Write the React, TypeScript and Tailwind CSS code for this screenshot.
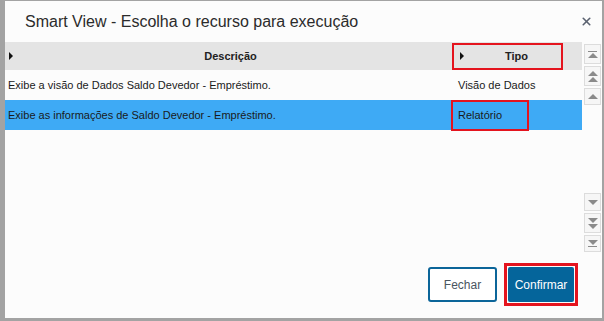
import { X } from 'lucide-react';

const font = { fontFamily: '"Liberation Sans", Arial, sans-serif' };

function Tri({ dir }: { dir: 'up' | 'down' }) {
  return dir === 'up' ? (
    <div className="w-0 h-0 border-l-[5px] border-r-[5px] border-b-[5px] border-l-transparent border-r-transparent border-b-[#8a8a8a]" />
  ) : (
    <div className="w-0 h-0 border-l-[5px] border-r-[5px] border-t-[5px] border-l-transparent border-r-transparent border-t-[#8a8a8a]" />
  );
}

function ScrollBtn({ children, h }: { children: React.ReactNode; h: string }) {
  return (
    <div className={`w-[17px] ${h} border border-[#dcdcdc] bg-[#f6f6f6] flex flex-col items-center justify-center gap-[1px]`}>
      {children}
    </div>
  );
}

function App() {
  return (
    <div className="w-[604px] h-[321px] bg-[#a3a3a3] pl-[5px] pt-[1px] pr-[2px] pb-[3px]" style={font}>
      <div className="w-full h-full bg-[#fcfcfc] flex flex-col">
        {/* título */}
        <div className="h-[41px] flex items-center justify-between pl-[20px] pr-[9px]">
          <span className="text-[16px] text-[#2b2b2b] pt-[1px]">Smart View - Escolha o recurso para execução</span>
          <X size={13} strokeWidth={3} className="text-[#5b6270]" />
        </div>

        <div className="flex flex-1">
          <div className="w-[577px] flex flex-col">
            {/* cabeçalho */}
            <div className="h-[28px] bg-[#e4e4e4] flex items-center text-[11px] font-bold text-[#222]">
              <div className="w-[447px] flex items-center pl-[4px]">
                <div className="w-0 h-0 border-t-[4px] border-b-[4px] border-l-[4px] border-t-transparent border-b-transparent border-l-[#111]" />
                <span className="flex-1 text-center pr-[4px]">Descrição</span>
              </div>
              <div className="w-[111px] h-[27px] border-2 border-[#e4141e] flex items-center pl-[6px]">
                <div className="w-0 h-0 border-t-[4px] border-b-[4px] border-l-[4px] border-t-transparent border-b-transparent border-l-[#111]" />
                <span className="flex-1 text-center pl-[8px]">Tipo</span>
              </div>
            </div>
            {/* linhas */}
            <div className="h-[30px] flex items-center text-[11px] text-[#1a1a1a]">
              <span className="w-[446px] pl-[3px]">Exibe a visão de Dados Saldo Devedor - Empréstimo.</span>
              <span className="pl-[7px]">Visão de Dados</span>
            </div>
            <div className="h-[30px] flex items-center text-[11px] text-[#1a1a1a] bg-[#3eaaf5]">
              <span className="w-[446px] pl-[3px]">Exibe as informações de Saldo Devedor - Empréstimo.</span>
              <div className="h-[31px] w-[78px] border-2 border-[#e4141e] flex items-center pl-[5px]">Relatório</div>
            </div>
          </div>

          {/* barra de rolagem */}
          <div className="ml-[2px] pt-[2px] flex flex-col w-[18px] h-[210px] justify-between">
            <div className="flex flex-col gap-[2px]">
              <ScrollBtn h="h-[20px]">
                <div className="w-[9px] h-[1px] bg-[#8a8a8a]" />
                <Tri dir="up" />
              </ScrollBtn>
              <ScrollBtn h="h-[20px]">
                <Tri dir="up" />
                <Tri dir="up" />
              </ScrollBtn>
              <ScrollBtn h="h-[17px]">
                <Tri dir="up" />
              </ScrollBtn>
            </div>
            <div className="flex flex-col gap-[2px]">
              <ScrollBtn h="h-[18px]">
                <Tri dir="down" />
              </ScrollBtn>
              <ScrollBtn h="h-[20px]">
                <Tri dir="down" />
                <Tri dir="down" />
              </ScrollBtn>
              <ScrollBtn h="h-[17px]">
                <Tri dir="down" />
                <div className="w-[9px] h-[1px] bg-[#8a8a8a]" />
              </ScrollBtn>
            </div>
          </div>
        </div>

        {/* botões */}
        <div className="h-[55px] flex items-start justify-end pr-[24px] gap-[7px]">
          <button className="mt-[4px] w-[69px] h-[35px] border-2 border-[#0b6599] rounded-[3px] bg-white text-[12px] text-[#4a5560]">
            Fechar
          </button>
          <div className="mt-[0px] border-[3px] border-[#e4141e] p-[1px]">
            <button className="w-[66px] h-[35px] bg-[#05659b] rounded-[2px] text-[12px] text-white">Confirmar</button>
          </div>
        </div>
      </div>
    </div>
  );
}

export default App;
